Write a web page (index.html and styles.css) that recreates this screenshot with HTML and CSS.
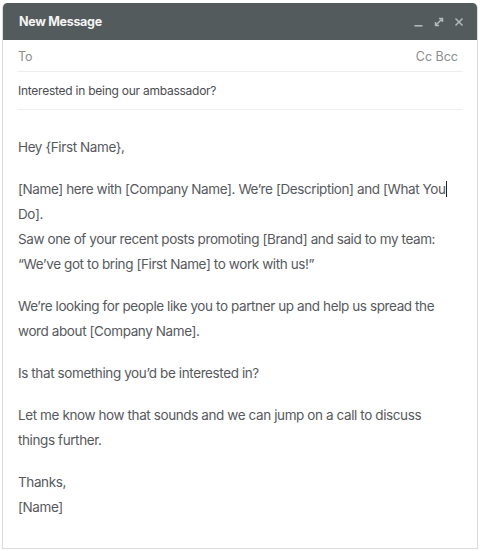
FILE: index.html
```html
<!DOCTYPE html>
<html lang="en">
<head>
<meta charset="utf-8">
<title>New Message</title>
<link rel="stylesheet" href="styles.css">
</head>
<body>
<div class="window">
  <div class="titlebar">
    <span class="title">New Message</span>
    <div class="controls">
      <svg class="icon" width="12" height="12" viewBox="0 0 12 12"><rect x="1.5" y="9" width="8" height="1.6" fill="currentColor"/></svg>
      <svg class="icon" width="12" height="12" viewBox="0 0 12 12"><path d="M2.5 9.5 L9.5 2.5 M6 2.5 H9.5 V6 M2.5 6 V9.5 H6" stroke="currentColor" stroke-width="1.5" fill="none"/></svg>
      <svg class="icon" width="12" height="12" viewBox="0 0 12 12"><path d="M2.5 2.5 L9.5 9.5 M9.5 2.5 L2.5 9.5" stroke="currentColor" stroke-width="1.5" fill="none"/></svg>
    </div>
  </div>
  <div class="field to-row">
    <span>To</span>
    <span>Cc Bcc</span>
  </div>
  <div class="field subject-row">
    <span class="subject">Interested in being our ambassador?</span>
  </div>
  <div class="body">
    <p>Hey {First Name},</p>
    <p>[Name] here with [Company Name]. We’re [Description] and [What You<span class="caret"></span><br>Do].<br>Saw one of your recent posts promoting [Brand] and said to my team:<br>“We’ve got to bring [First Name] to work with us!”</p>
    <p>We’re looking for people like you to partner up and help us spread the<br>word about [Company Name].</p>
    <p>Is that something you’d be interested in?</p>
    <p>Let me know how that sounds and we can jump on a call to discuss<br>things further.</p>
    <p>Thanks,<br>[Name]</p>
  </div>
</div>
</body>
</html>
```
FILE: styles.css
```css
* { box-sizing: border-box; }
html, body { margin: 0; padding: 0; background: #fff; }
body { font-family: Inter, "Noto Sans", sans-serif; }
.window {
  margin: 3px 2px 0 2px;
  width: 476px;
  height: 546px;
  border: 1px solid #dcdcdc;
  border-top: none;
  border-radius: 5px 5px 0 0;
  box-shadow: 0 0 1px rgba(0,0,0,0.08);
  overflow: hidden;
  display: flex;
  flex-direction: column;
}
.titlebar {
  height: 37px;
  background: #545b5c;
  border-radius: 5px 5px 0 0;
  margin: 0 -1px;
  display: flex;
  align-items: center;
  justify-content: space-between;
  padding: 0 13px 0 17px;
}
.title {
  color: #f4f4f4;
  font-weight: 700;
  font-size: 12.5px;
  letter-spacing: -0.3px;
}
.controls {
  display: flex;
  gap: 8px;
  color: #b3b8b9;
  align-items: center;
}
.icon { display: block; }
.field {
  margin: 0 14px;
  border-bottom: 1px solid #efefef;
  display: flex;
  align-items: center;
  justify-content: space-between;
  padding: 0 5px 0 1px;
  font-size: 12.5px;
}
.to-row { height: 32px; color: #8a8d90; padding-top: 1px; }
.subject-row { height: 38px; color: #4a4d50; font-size: 12px; letter-spacing: -0.25px; }
.body {
  padding: 25px 15px 0 15px;
  color: #56595d;
  font-size: 13.5px;
  letter-spacing: -0.4px;
  line-height: 25px;
  white-space: nowrap;
}
.body p { margin: 0 0 17px 0; }
.caret {
  display: inline-block;
  width: 1px;
  height: 16px;
  background: #222;
  vertical-align: -3px;
}
```
